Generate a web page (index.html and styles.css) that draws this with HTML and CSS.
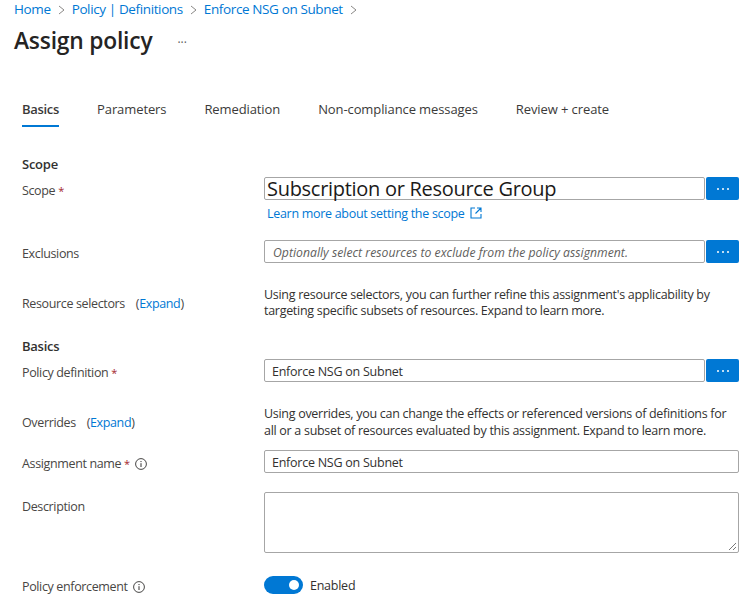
FILE: index.html
```html
<!DOCTYPE html>
<html lang="en">
<head>
<meta charset="utf-8">
<title>Assign policy</title>
<link rel="stylesheet" href="styles.css">
</head>
<body>
<div class="page">
  <nav class="crumbs">
    <a>Home</a><span class="sep"><svg width="7" height="10" viewBox="0 0 7 10"><path d="M1 1l5 4-5 4" fill="none" stroke="#8a8886"/></svg></span>
    <a>Policy | Definitions</a><span class="sep"><svg width="7" height="10" viewBox="0 0 7 10"><path d="M1 1l5 4-5 4" fill="none" stroke="#8a8886"/></svg></span>
    <a>Enforce NSG on Subnet</a><span class="sep"><svg width="7" height="10" viewBox="0 0 7 10"><path d="M1 1l5 4-5 4" fill="none" stroke="#8a8886"/></svg></span>
  </nav>
  <header class="title-row">
    <h1>Assign policy</h1>
    <span class="more">···</span>
  </header>
  <div class="tabs">
    <span class="tab active">Basics</span>
    <span class="tab">Parameters</span>
    <span class="tab">Remediation</span>
    <span class="tab">Non-compliance messages</span>
    <span class="tab">Review + create</span>
  </div>
  <form class="form">
    <h2 class="h-scope">Scope</h2>
    <div class="row r-scope">
      <label>Scope <em>*</em></label>
      <div class="field">
        <div class="pick">
          <div class="input big">Subscription or Resource Group</div>
          <button type="button" class="dots"><i></i><i></i><i></i></button>
        </div>
        <a class="learn">Learn more about setting the scope
          <svg width="12" height="12" viewBox="0 0 12 12"><path d="M5 1H1v10h10V7M7 1h4v4M11 1L5.5 6.5" fill="none" stroke="#0078d4" stroke-width="1.1"/></svg>
        </a>
      </div>
    </div>
    <div class="row r-excl">
      <label>Exclusions</label>
      <div class="pick">
        <div class="input hint">Optionally select resources to exclude from the policy assignment.</div>
        <button type="button" class="dots"><i></i><i></i><i></i></button>
      </div>
    </div>
    <div class="row r-sel">
      <label class="plain">Resource selectors <span class="paren">(<a>Expand</a>)</span></label>
      <p>Using resource selectors, you can further refine this assignment's applicability by targeting specific subsets of resources. Expand to learn more.</p>
    </div>
    <h2 class="h-basics">Basics</h2>
    <div class="row r-def">
      <label>Policy definition <em>*</em></label>
      <div class="pick">
        <div class="input">Enforce NSG on Subnet</div>
        <button type="button" class="dots"><i></i><i></i><i></i></button>
      </div>
    </div>
    <div class="row r-over">
      <label class="plain">Overrides <span class="paren">(<a>Expand</a>)</span></label>
      <p class="tall">Using overrides, you can change the effects or referenced versions of definitions for all or a subset of resources evaluated by this assignment. Expand to learn more.</p>
    </div>
    <div class="row r-name">
      <label>Assignment name <em>*</em>
        <svg class="info" width="12" height="12" viewBox="0 0 12 12"><circle cx="6" cy="6" r="5.4" fill="none" stroke="#323130" stroke-width=".9"/><path d="M6 5.2V9M6 3v1.1" stroke="#323130"/></svg>
      </label>
      <div class="input wide">Enforce NSG on Subnet</div>
    </div>
    <div class="row r-desc">
      <label>Description</label>
      <div class="area">
        <svg class="grip" width="9" height="9" viewBox="0 0 9 9"><path d="M1 8l7-7M5 8l3-3" stroke="#777" fill="none"/></svg>
      </div>
    </div>
    <div class="row r-enf">
      <label>Policy enforcement
        <svg class="info" width="12" height="12" viewBox="0 0 12 12"><circle cx="6" cy="6" r="5.4" fill="none" stroke="#323130" stroke-width=".9"/><path d="M6 5.2V9M6 3v1.1" stroke="#323130"/></svg>
      </label>
      <div class="toggle-wrap"><span class="toggle"><b></b></span><span class="toggle-text">Enabled</span></div>
    </div>
  </form>
</div>
</body>
</html>
```

FILE: styles.css
```css
* { box-sizing: border-box; }
html, body { margin: 0; height: 598px; overflow: hidden; background: #fff; }
body {
  font-family: "Open Sans", "Noto Sans", sans-serif;
  font-size: 12.5px;
  color: #323130;
  letter-spacing: -0.25px;
}
a { color: #0078d4; }
.page { display: flex; flex-direction: column; }

.crumbs {
  display: flex; align-items: center; height: 18px; padding-left: 14px;
  font-size: 13.5px; letter-spacing: -0.38px; color: #0078d4;
}
.sep { display: inline-flex; width: 21px; justify-content: center; padding-top: 1px; }

.title-row { display: flex; align-items: center; height: 30px; padding-left: 14px; margin-top: 8px; }
h1 { margin: 0; font-size: 22.8px; font-weight: 600; color: #252423; letter-spacing: -0.2px; line-height: 30px; }
.more { margin-left: 25px; font-size: 12px; color: #605e5c; letter-spacing: 0; padding-top: 2px; }

.tabs { display: flex; gap: 38px; padding-left: 22px; margin-top: 41px; height: 30px; font-size: 13px; color: #3b3a39; letter-spacing: -0.1px; }
.tab { height: 30px; padding-top: 3px; line-height: 18px; }
.tab.active { font-weight: 600; border-bottom: 2px solid #0078d4; letter-spacing: -0.3px; }

.form { padding: 0 5px 0 22px; display: flex; flex-direction: column; }
h2 { margin: 0; font-size: 13px; font-weight: 600; color: #323130; line-height: 18px; }
.h-scope { margin-top: 28px; }
.h-basics { margin-top: 18px; }

.row { display: grid; grid-template-columns: 242px 475px; align-items: center; }
label { color: #484644; padding-top: 4px; letter-spacing: -0.36px; }
label.plain { padding-top: 0; }
em { font-style: normal; color: #a4262c; font-size: 11px; }
.paren { margin-left: 8px; }
.info { vertical-align: -2px; margin-left: 2px; }

.r-scope { margin-top: 4px; align-items: start; }
.r-scope label { padding-top: 5px; }
.r-excl { margin-top: 17px; }
.r-sel { margin-top: 24px; }
.r-def { margin-top: 4px; }
.r-over { margin-top: 23px; }
.r-name { margin-top: 11px; }
.r-desc { margin-top: 19px; align-items: start; }
.r-desc label { padding-top: 6px; }
.r-enf { margin-top: 21px; }

.pick { display: flex; gap: 1px; height: 23px; }
.input {
  flex: 1; height: 23px; border: 1px solid #a6a6a6; border-radius: 2px;
  padding-left: 7px; line-height: 23px; color: #323130; white-space: nowrap;
}
.input.wide { width: 475px; }
.input.big { font-size: 20px; padding-left: 2px; color: #1b1a19; letter-spacing: -0.29px; line-height: 22px; }
.input.hint { font-style: italic; color: #605e5c; font-size: 12.2px; padding-left: 8px; letter-spacing: 0.03px; }
.dots {
  width: 33px; height: 23px; border: 0; border-radius: 2px; background: #0078d4; padding: 0;
  display: flex; align-items: center; justify-content: center; gap: 3px;
}
.dots i { width: 2px; height: 2px; border-radius: 50%; background: #fff; }
.learn { display: block; padding-left: 3px; margin-top: 5px; line-height: 18px; letter-spacing: -0.3px; }
.learn svg { vertical-align: -1px; margin-left: 3px; }
p { margin: 0; line-height: 16px; height: 32px; color: #323130; width: 470px; letter-spacing: -0.29px; }
p.tall { line-height: 17px; height: 34px; }

.area { position: relative; width: 475px; height: 61px; border: 1px solid #a6a6a6; border-radius: 2px; }
.grip { position: absolute; right: 1px; bottom: 1px; }

.toggle-wrap { display: flex; align-items: center; gap: 7px; }
.toggle { width: 39px; height: 18px; border-radius: 9px; background: #0078d4; display: flex; align-items: center; justify-content: flex-end; padding-right: 4px; }
.toggle b { width: 10px; height: 10px; border-radius: 50%; background: #fff; }
.toggle-text { padding-top: 2px; }
```
